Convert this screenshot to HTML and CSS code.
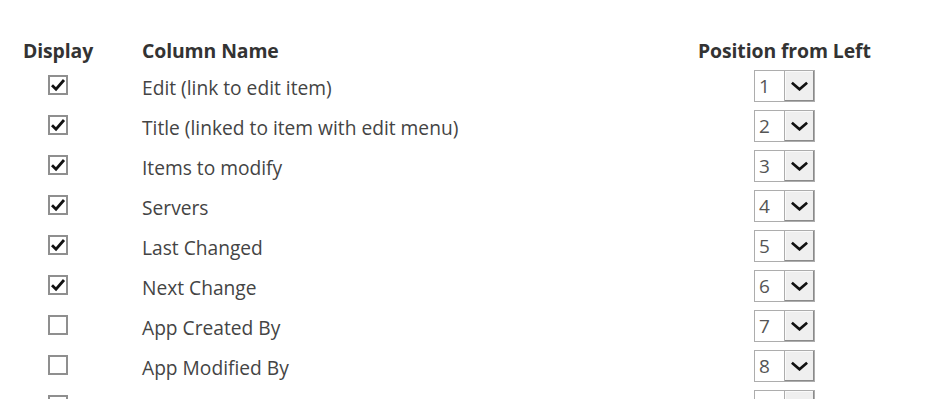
FILE: index.html
```html
<!DOCTYPE html>
<html lang="en">
<head>
<meta charset="utf-8">
<title>Columns</title>
<link rel="stylesheet" href="styles.css">
</head>
<body>
<div class="table">
  <div class="hdr c1">Display</div>
  <div class="hdr c2">Column Name</div>
  <div class="hdr c3">Position from Left</div>

  <div class="cell c1"><span class="cb on"><svg viewBox="0 0 16 16"><path d="M2 8.2 L6 12.2 L14 3"/></svg></span></div>
  <div class="cell c2">Edit (link to edit item)</div>
  <div class="cell c3"><span class="sel"><span class="num">1</span><span class="btn"><svg viewBox="0 0 20 10"><path d="M2 1.5 L10 8.5 L18 1.5"/></svg></span></span></div>

  <div class="cell c1"><span class="cb on"><svg viewBox="0 0 16 16"><path d="M2 8.2 L6 12.2 L14 3"/></svg></span></div>
  <div class="cell c2">Title (linked to item with edit menu)</div>
  <div class="cell c3"><span class="sel"><span class="num">2</span><span class="btn"><svg viewBox="0 0 20 10"><path d="M2 1.5 L10 8.5 L18 1.5"/></svg></span></span></div>

  <div class="cell c1"><span class="cb on"><svg viewBox="0 0 16 16"><path d="M2 8.2 L6 12.2 L14 3"/></svg></span></div>
  <div class="cell c2">Items to modify</div>
  <div class="cell c3"><span class="sel"><span class="num">3</span><span class="btn"><svg viewBox="0 0 20 10"><path d="M2 1.5 L10 8.5 L18 1.5"/></svg></span></span></div>

  <div class="cell c1"><span class="cb on"><svg viewBox="0 0 16 16"><path d="M2 8.2 L6 12.2 L14 3"/></svg></span></div>
  <div class="cell c2">Servers</div>
  <div class="cell c3"><span class="sel"><span class="num">4</span><span class="btn"><svg viewBox="0 0 20 10"><path d="M2 1.5 L10 8.5 L18 1.5"/></svg></span></span></div>

  <div class="cell c1"><span class="cb on"><svg viewBox="0 0 16 16"><path d="M2 8.2 L6 12.2 L14 3"/></svg></span></div>
  <div class="cell c2">Last Changed</div>
  <div class="cell c3"><span class="sel"><span class="num">5</span><span class="btn"><svg viewBox="0 0 20 10"><path d="M2 1.5 L10 8.5 L18 1.5"/></svg></span></span></div>

  <div class="cell c1"><span class="cb on"><svg viewBox="0 0 16 16"><path d="M2 8.2 L6 12.2 L14 3"/></svg></span></div>
  <div class="cell c2">Next Change</div>
  <div class="cell c3"><span class="sel"><span class="num">6</span><span class="btn"><svg viewBox="0 0 20 10"><path d="M2 1.5 L10 8.5 L18 1.5"/></svg></span></span></div>

  <div class="cell c1"><span class="cb"></span></div>
  <div class="cell c2">App Created By</div>
  <div class="cell c3"><span class="sel"><span class="num">7</span><span class="btn"><svg viewBox="0 0 20 10"><path d="M2 1.5 L10 8.5 L18 1.5"/></svg></span></span></div>

  <div class="cell c1"><span class="cb"></span></div>
  <div class="cell c2">App Modified By</div>
  <div class="cell c3"><span class="sel"><span class="num">8</span><span class="btn"><svg viewBox="0 0 20 10"><path d="M2 1.5 L10 8.5 L18 1.5"/></svg></span></span></div>

  <div class="cell c1"><span class="cb"></span></div>
  <div class="cell c2"></div>
  <div class="cell c3"><span class="sel"><span class="num"></span><span class="btn"></span></span></div>
</div>
</body>
</html>
```
FILE: styles.css
```css
html, body {
  margin: 0;
  padding: 0;
  background: #fff;
  overflow: hidden;
  height: 399px;
}
body {
  font-family: "Open Sans", "Noto Sans", sans-serif;
  font-size: 19.2px;
  color: #444;
}
.table {
  display: grid;
  grid-template-columns: 119px 556px max-content;
  grid-auto-rows: 40px;
  grid-template-rows: 30px;
  padding: 36px 0 0 23px;
  height: 363px;
  overflow: hidden;
}
.hdr {
  font-weight: 700;
  color: #333;
  font-size: 19.4px;
  line-height: 30px;
  letter-spacing: -0.1px;
}
.cell {
  display: flex;
  align-items: center;
  line-height: 40px;
}
.cell.c1 {
  width: 69px;
  justify-content: center;
}
.hdr.c1 { width: 69px; text-align: center; }
.hdr.c3 { text-align: center; }
.cell.c3 { justify-content: center; }
.cell.c2 { padding-top: 4px; box-sizing: border-box; }
.cb {
  width: 20px;
  height: 20px;
  box-sizing: border-box;
  border: 2px solid #8f8f8f;
  background: #fff;
  display: inline-flex;
  margin-top: -2px;
}
.cb svg {
  width: 16px;
  height: 16px;
  fill: none;
  stroke: #111;
  stroke-width: 2.8;
}
.sel {
  display: inline-flex;
  width: 61px;
  height: 32px;
  box-sizing: border-box;
  border: 1px solid #adadad;
  background: #fff;
}
.num {
  width: 29px;
  box-sizing: border-box;
  padding-left: 4px;
  line-height: 31px;
  color: #555;
  font-size: 19px;
}
.btn {
  flex: 1;
  background: #efefef;
  border-left: 1px solid #adadad;
  box-shadow: inset -1px -1px 0 #8a8a8a, inset 1px 1px 0 #fafafa;
  display: flex;
  align-items: center;
  justify-content: center;
}
.btn svg {
  width: 19px;
  height: 10px;
  fill: none;
  stroke: #111;
  stroke-width: 2.8;
}
```
